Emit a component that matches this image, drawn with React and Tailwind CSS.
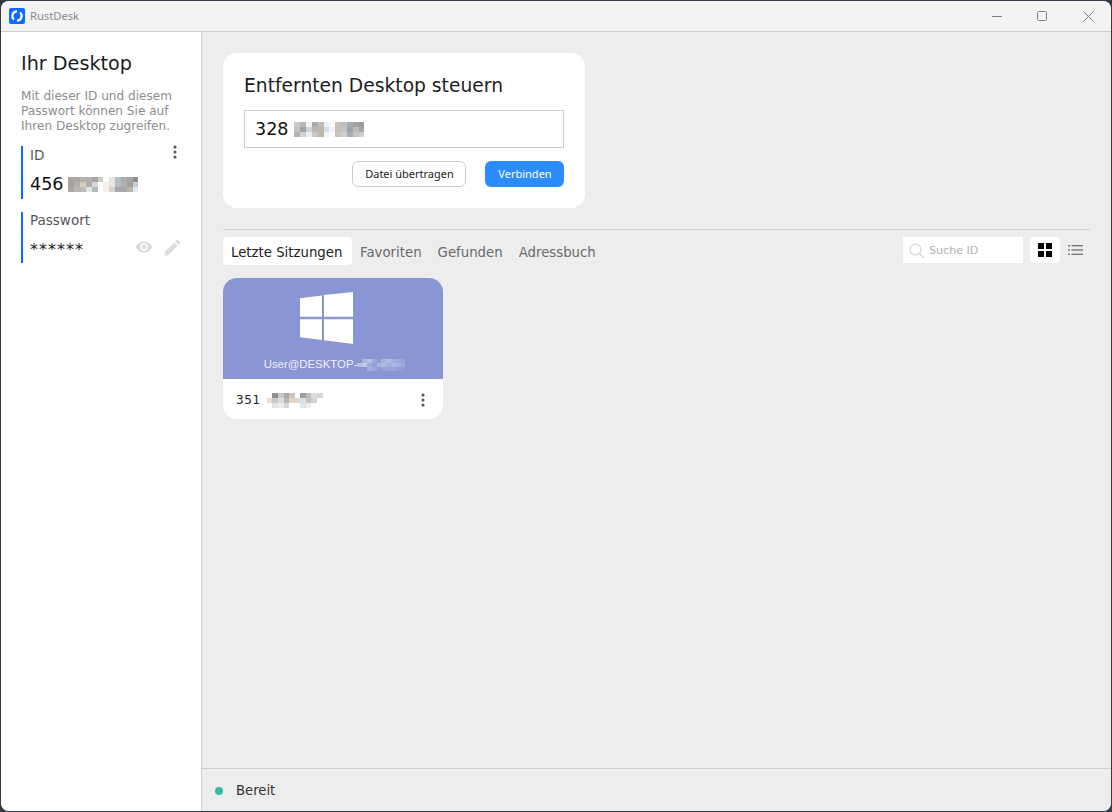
import React from "react";

const sans = "font-['DejaVu_Sans',sans-serif]";

function Mosaic({ rows, width, cell }) {
  const cols = rows[0].length;
  return (
    <div className="flex flex-col shrink-0" style={{ width }}>
      {rows.map((r, i) => (
        <div key={i} className="flex" style={{ height: cell }}>
          {r.map((c, j) => (
            <div key={j} style={{ width: width / cols, backgroundColor: c }} />
          ))}
        </div>
      ))}
    </div>
  );
}

const idRows = [
  ["#a9a6a4", "#a9a6a4", "#b5b1ae", "#b4b0ac", "#a7a4a2", "#cfcbc5", "#fefefe", "#e9e6e1", "#b4bcc6", "#a9aeb6", "#a5a5a7", "#8f8f91"],
  ["#a4a1a0", "#b0adab", "#d9cdbd", "#b0aca8", "#d5d9dd", "#ffffff", "#f3efe9", "#e8e3dc", "#b6bcc4", "#b2b2b2", "#a09e9d", "#c4cdd4"],
  ["#aaa7a5", "#b9b6b4", "#bcb9b7", "#dfe5ea", "#b6b6b6", "#ffffff", "#f4f1ec", "#d8d3cc", "#a9a9ab", "#a8a6a6", "#bdb4aa", "#dfebf2"],
];
const connRows = [
  ["#c8ccd0", "#b5b7ba", "#f5f3ef", "#a9a9aa", "#c4bcb5", "#eaf0f5", "#fbfbfa", "#c9c2ba", "#bcc0c5", "#a8acb2", "#a1a2a4", "#9d9c9b"],
  ["#c4c2c0", "#a3a3a5", "#d0d4da", "#b9b5b1", "#bfb8b0", "#d4dfea", "#f0f3f6", "#c7c0b8", "#c1c5ca", "#9ea3ab", "#bbbbbb", "#a7a5a2"],
  ["#b2b2b1", "#cfd2d6", "#e6eef4", "#c8c8c8", "#bfb5aa", "#eef3f7", "#fafafa", "#c9c3bb", "#d0d0cf", "#a9adb3", "#c6c4c1", "#d2d0cd"],
];
const deskRows = [
  ["#8a95d3", "#aeb6e0", "#b9c0e4", "#9ca6da", "#8f9ad5", "#a9b1df", "#b4bce3", "#a4addd", "#9ca6da", "#99a3d9"],
  ["#b8bfe4", "#c3c9e8", "#a1abdc", "#98a2d8", "#aab3df", "#b2bae2", "#a6afde", "#aab3df", "#a6afde", "#9fa9db"],
  ["#8a95d3", "#8a95d3", "#a5aedd", "#9fa8da", "#8f9ad5", "#97a1d8", "#9aa4d9", "#9aa4d9", "#949ed7", "#919cd6"],
];
const peerRows = [
  ["#ffffff", "#8f8f8f", "#c8c8c8", "#a9a9a9", "#c9c5c0", "#ffffff", "#9f9f9f", "#bdbdbd", "#dddddd", "#d6d6d6"],
  ["#ecdccc", "#c9c9c9", "#dcdcdc", "#bdb5ad", "#e0d6ca", "#e6d8c8", "#d5e2ec", "#c4c4c4", "#d3d3d3", "#ffffff"],
  ["#ffffff", "#e4e4e4", "#ececec", "#d9d9d9", "#ffffff", "#ffffff", "#dde3e8", "#ececec", "#ffffff", "#ffffff"],
];

function Dots({ className }) {
  return (
    <svg width="4" height="14" viewBox="0 0 4 14" className={className} fill="#555">
      <circle cx="2" cy="2" r="1.6" />
      <circle cx="2" cy="7" r="1.6" />
      <circle cx="2" cy="12" r="1.6" />
    </svg>
  );
}

function Logo() {
  return (
    <svg width="16" height="16" viewBox="0 0 16 16">
      <rect width="16" height="16" rx="2" fill="#0a6cff" />
      <path d="M8 3.4A4.6 4.6 0 0 0 5 11.5" fill="none" stroke="#fff" strokeWidth="2.2" />
      <path d="M8 12.6A4.6 4.6 0 0 0 11 4.5" fill="none" stroke="#fff" strokeWidth="2.2" />
    </svg>
  );
}

function Tab({ children, active, className = "" }) {
  return (
    <div className={`h-7 pt-[3px] flex items-center rounded-sm text-[13.3px] ${active ? "bg-white text-[#222] w-[129px] pl-2" : "text-[#6b6b6b]"} ${className}`}>
      {children}
    </div>
  );
}

export default function App() {
  return (
    <div className={`w-[1112px] h-[812px] bg-[#323c48] p-px ${sans}`}>
      <div className="w-full h-full rounded-lg overflow-hidden flex flex-col bg-white">
        <div className="h-[31px] shrink-0 bg-[#f3f3f3] border-b border-[#cfcfcf] flex items-center">
          <div className="ml-2 mr-[5px] flex items-center"><Logo /></div>
          <span className="text-[11.2px] text-[#8a8a8a] font-['Noto_Sans',sans-serif]">RustDesk</span>
          <div className="ml-auto flex items-center">
            <svg width="10" height="10" viewBox="0 0 10 10" className="mr-[35px]" stroke="#808080" fill="none"><path d="M0 5.5h10" /></svg>
            <svg width="10" height="10" viewBox="0 0 10 10" className="mr-[36px]" stroke="#808080" fill="none"><rect x="0.5" y="0.5" width="9" height="9" rx="1" /></svg>
            <svg width="11" height="11" viewBox="0 0 11 11" className="mr-[17px]" stroke="#808080" fill="none"><path d="M0.5 0.5l10 10M10.5 0.5l-10 10" /></svg>
          </div>
        </div>

        <div className="flex-1 flex min-h-0">
          <aside className="w-[201px] shrink-0 bg-white border-r border-[#cfcfcf] pl-5 pr-[18px] pt-[18px]">
            <h1 className="text-[19.2px] leading-7 text-[#1c1c1c]">Ihr Desktop</h1>
            <p className="mt-[11px] text-[12.1px] leading-[15px] text-[#8d8d8d]">
              Mit dieser ID und diesem Passwort können Sie auf Ihren Desktop zugreifen.
            </p>
            <div className="mt-[12px] h-[53px] border-l-2 border-[#0a6cff] pl-[7px]">
              <div className="flex justify-between items-center h-[17px] pt-[1px]">
                <span className="text-[13.5px] text-[#555]">ID</span>
                <Dots className="mr-[6px] -mt-[6px]" />
              </div>
              <div className="flex items-center mt-[9px] gap-[5px] h-[24px] text-[#111] text-[17.5px]">
                <span>456</span>
                <Mosaic rows={idRows} width={70} cell={5} />
              </div>
            </div>
            <div className="mt-[13px] h-[51px] border-l-2 border-[#0a6cff] pl-[7px]">
              <div className="h-[17px] text-[13.5px] text-[#555] flex items-center">Passwort</div>
              <div className="flex items-center mt-[6px] h-[24px]">
                <span className="pt-[6px] text-[16px] text-[#222] tracking-[1px]">******</span>
                <svg width="18" height="18" viewBox="0 0 24 24" fill="#dcdcdc" className="ml-auto">
                  <path d="M12 4.5C7 4.5 2.73 7.61 1 12c1.73 4.39 6 7.5 11 7.5s9.27-3.11 11-7.5c-1.73-4.39-6-7.5-11-7.5zM12 17c-2.76 0-5-2.24-5-5s2.24-5 5-5 5 2.24 5 5-2.24 5-5 5zm0-8c-1.66 0-3 1.34-3 3s1.34 3 3 3 3-1.34 3-3-1.34-3-3-3z" />
                </svg>
                <svg width="21" height="21" viewBox="0 0 24 24" fill="#dcdcdc" className="ml-[9px]">
                  <path d="M3 17.25V21h3.75L17.81 9.94l-3.75-3.75L3 17.25zM20.71 7.04a1 1 0 0 0 0-1.41l-2.34-2.34a1 1 0 0 0-1.41 0l-1.83 1.83 3.75 3.75 1.83-1.83z" />
                </svg>
              </div>
            </div>
          </aside>

          <main className="flex-1 min-w-0 flex flex-col bg-[#ededed]">
            <div className="flex-1 pl-[21px] pr-[21px] pt-[21px]">
              <section className="w-[362px] h-[155px] bg-white rounded-[14px] px-[21px] pt-[18px]">
                <h2 className="text-[18.7px] leading-[30px] text-[#1c1c1c]">Entfernten Desktop steuern</h2>
                <div className="mt-[9px] h-[38px] border border-[#cccccc] flex items-center pl-[10px] gap-[6px] text-[17.5px] text-[#111]">
                  <span>328</span>
                  <Mosaic rows={connRows} width={70} cell={5} />
                </div>
                <div className="mt-[13px] flex justify-end gap-[19px] font-['Noto_Sans',sans-serif] text-[11px]">
                  <button className="w-[114px] h-[26px] pl-px border border-[#cccccc] rounded-md bg-white text-[#222]">Datei übertragen</button>
                  <button className="w-[79px] h-[26px] pl-px rounded-md bg-[#2c8cff] text-white">Verbinden</button>
                </div>
              </section>

              <div className="mt-[21px] border-t border-[#cfcfcf] pt-[7px] flex items-start">
                <Tab active className="mr-2">Letzte Sitzungen</Tab>
                <Tab className="mr-4">Favoriten</Tab>
                <Tab className="mr-4">Gefunden</Tab>
                <Tab>Adressbuch</Tab>
                <div className="ml-auto flex items-center">
                  <div className="w-[120px] h-[26px] bg-white flex items-center pl-[6px] gap-[5px]">
                    <svg width="15" height="15" viewBox="0 0 15 15" fill="none" stroke="#d0d0d0" strokeWidth="1.1">
                      <circle cx="6.5" cy="6.5" r="5.5" /><path d="M10.5 10.5l4 4" />
                    </svg>
                    <span className="pt-[2px] text-[11.1px] text-[#b0b0b0]">Suche ID</span>
                  </div>
                  <div className="ml-[7px] w-[30px] h-[26px] bg-white rounded flex items-center justify-center">
                    <div className="grid grid-cols-2 gap-[2px]">
                      <div className="w-[6px] h-[6px] bg-black" /><div className="w-[6px] h-[6px] bg-black" />
                      <div className="w-[6px] h-[6px] bg-black" /><div className="w-[6px] h-[6px] bg-black" />
                    </div>
                  </div>
                  <svg width="15" height="12" viewBox="0 0 15 12" className="ml-2 mr-[7px]" fill="#777">
                    <rect x="0" y="1" width="2" height="1.4" /><rect x="3.5" y="1" width="11.5" height="1.4" />
                    <rect x="0" y="5.3" width="2" height="1.4" /><rect x="3.5" y="5.3" width="11.5" height="1.4" />
                    <rect x="0" y="9.6" width="2" height="1.4" /><rect x="3.5" y="9.6" width="11.5" height="1.4" />
                  </svg>
                </div>
              </div>

              <article className="mt-[13px] w-[220px] h-[141px] rounded-[14px] overflow-hidden bg-white flex flex-col">
                <div className="h-[101px] bg-[#8a95d3] flex flex-col items-center pt-[14px]">
                  <svg width="53" height="52" viewBox="0 0 53 52" fill="#fff" className="mr-[14px]">
                    <polygon points="0,6.3 22,3.4 22,24.7 0,24.7" />
                    <polygon points="24,3 53,0 53,24.7 24,24.7" />
                    <polygon points="0,27.3 22,27.3 22,48 0,45.3" />
                    <polygon points="24,27.3 53,27.3 53,52 24,48.3" />
                  </svg>
                  <div className="mt-[13px] ml-[3px] flex items-center font-['Liberation_Sans',sans-serif] text-[11.4px] leading-[15px] text-[#eef0fa]">
                    <span>User@DESKTOP-</span>
                    <Mosaic rows={deskRows} width={48} cell={4} />
                  </div>
                </div>
                <div className="flex-1 flex items-center pl-[13px] pr-[18px] pt-[2px] gap-[6px]">
                  <span className="text-xs text-[#222] tracking-[0.6px]">351</span>
                  <Mosaic rows={peerRows} width={56} cell={5} />
                  <Dots className="ml-auto" />
                </div>
              </article>
            </div>

            <footer className="h-[43px] shrink-0 border-t border-[#cfcfcf] flex items-center pl-[13px] pt-px">
              <div className="w-2 h-2 rounded-full bg-[#32bea6]" />
              <span className="ml-[13px] text-[13.2px] text-[#333]">Bereit</span>
            </footer>
          </main>
        </div>
      </div>
    </div>
  );
}
